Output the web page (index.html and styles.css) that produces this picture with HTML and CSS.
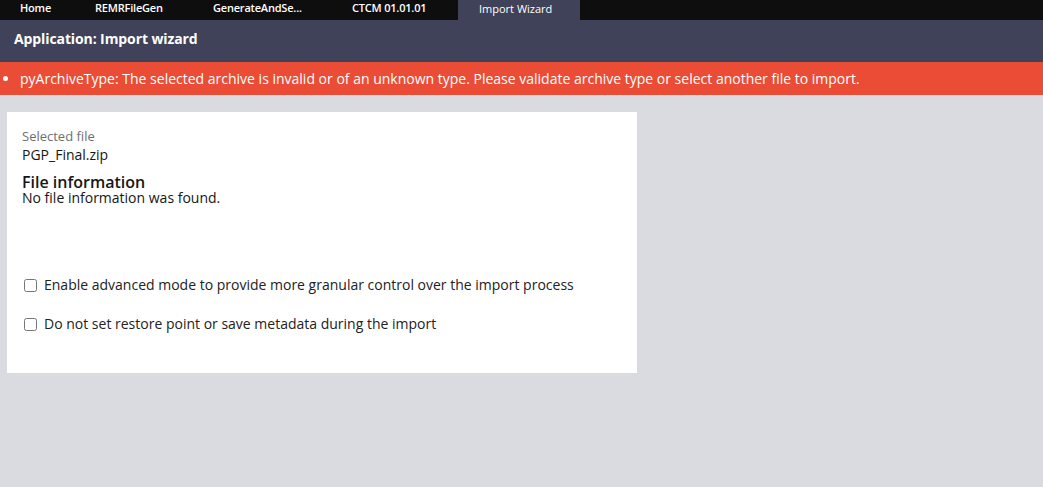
FILE: index.html
```html
<!DOCTYPE html>
<html>
<head>
<meta charset="utf-8">
<link rel="stylesheet" href="styles.css">
</head>
<body>
<nav class="tabs">
  <div class="tab t1">Home</div>
  <div class="tab t2">REMRFileGen</div>
  <div class="tab t3">GenerateAndSe...</div>
  <div class="tab t4">CTCM 01.01.01</div>
  <div class="tab active">Import Wizard</div>
</nav>
<header class="header">Application: Import wizard</header>
<div class="error"><ul><li>pyArchiveType: The selected archive is invalid or of an unknown type. Please validate archive type or select another file to import.</li></ul></div>
<main class="main">
  <section class="card">
    <div class="label">Selected file</div>
    <div class="value file">PGP_Final.zip</div>
    <h2 class="heading">File information</h2>
    <div class="value info">No file information was found.</div>
    <label class="check first"><input type="checkbox"><span>Enable advanced mode to provide more granular control over the import process</span></label>
    <label class="check second"><input type="checkbox"><span>Do not set restore point or save metadata during the import</span></label>
  </section>
</main>
</body>
</html>
```
FILE: styles.css
```css
html, body { margin: 0; padding: 0; }
body {
  background: #dadbe0;
  font-family: "Open Sans", "Liberation Sans", sans-serif;
  color: #1e1e1e;
  width: 1043px;
  height: 487px;
  overflow: hidden;
}
.tabs {
  display: flex;
  background: #0e0e0e;
  height: 20px;
}
.tab {
  color: #fff;
  font-size: 11px;
  line-height: 15px;
  font-weight: 600;
  letter-spacing: -0.2px;
  box-sizing: border-box;
}
.t1 { width: 95px; padding-left: 20px; }
.t2 { width: 118px; }
.t3 { width: 139px; }
.t4 { width: 106px; }
.tab.active {
  background: #404259;
  width: 122px;
  padding-left: 21px;
  line-height: 17px;
  font-weight: 400;
  letter-spacing: 0;
}
.header {
  background: #404259;
  color: #fff;
  height: 42px;
  box-sizing: border-box;
  padding: 9px 14px 0;
  font-size: 14px;
  font-weight: 700;
  letter-spacing: -0.1px;
}
.error {
  background: #ea4c36;
  color: #fff;
  height: 33px;
  font-size: 14px;
}
.error ul { margin: 0; padding: 0 0 0 20px; }
.error li { line-height: 33px; }
.main { padding: 17px 7px; }
.card {
  background: #fff;
  width: 630px;
  height: 261px;
  box-sizing: border-box;
  padding: 15px 15px;
}
.label { font-size: 13px; color: #6e6e6e; line-height: 18px; }
.value { font-size: 14px; line-height: 18px; color: #161616; }
.value.file { margin-top: 1px; }
.heading { margin: 10px 0 0; font-size: 16px; font-weight: 600; line-height: 16px; color: #161616; }
.value.info { line-height: 14px; margin-top: 1px; }
.check { display: flex; align-items: center; font-size: 14px; line-height: 18px; color: #222; }
.check.first { margin-top: 71px; }
.check.second { margin-top: 21px; }
.check input { margin: 0 7px 0 2px; width: 13px; height: 13px; }
```
